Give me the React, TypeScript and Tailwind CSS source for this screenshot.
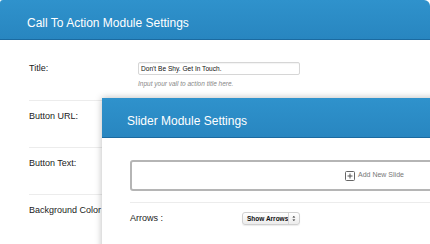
import React from "react";

function Label({ children }: { children: React.ReactNode }) {
  return <div className="w-[109px] shrink-0 text-[9px] leading-[13px] text-[#222] whitespace-nowrap">{children}</div>;
}

export default function App() {
  return (
    <div className="relative w-[430px] h-[244px] overflow-hidden bg-white font-['Liberation_Sans',Arial,sans-serif]">
      {/* Back panel */}
      <div className="w-[430px] rounded-tl-[3px] rounded-tr-[6px] overflow-hidden">
        <div className="h-[40px] flex items-center pt-[7px] pl-[27px] bg-gradient-to-b from-[#2f92cc] to-[#2886c0] border-b border-[#1b6aa0]">
          <span className="text-white text-[12px] leading-none">Call To Action Module Settings</span>
        </div>
        <div className="pl-[29px]">
          <div className="flex pt-[22px] pb-[12px] border-b border-[#ececec]">
            <Label>Title:</Label>
            <div>
              <div className="w-[162px] h-[13px] border border-[#d6d6d6] rounded-[2px] flex items-center pl-[2px] text-[6.6px] text-[#111] shadow-[inset_0_1px_1px_rgba(0,0,0,0.05)]">
                Don't Be Shy. Get In Touch.
              </div>
              <div className="mt-[5px] text-[6.5px] leading-[8px] italic text-[#888]">Input your vall to action title here.</div>
            </div>
          </div>
          <div className="flex h-[47px] pt-[9px] border-b border-[#ececec]">
            <Label>Button URL:</Label>
          </div>
          <div className="flex h-[47px] pt-[9px] border-b border-[#ececec]">
            <Label>Button Text:</Label>
          </div>
          <div className="flex h-[47px] pt-[9px]">
            <Label>Background Color</Label>
          </div>
        </div>
      </div>

      {/* Front panel */}
      <div className="absolute left-[102px] top-[98px] w-[360px] h-[170px] bg-white shadow-[0_0_7px_rgba(0,0,0,0.28)]">
        <div className="h-[40px] flex items-center pt-[7px] pl-[25px] bg-gradient-to-b from-[#2f92cc] to-[#2886c0] border-b border-[#1b6aa0]">
          <span className="text-white text-[12px] leading-none">Slider Module Settings</span>
        </div>
        <div className="pl-[28px]">
          <div className="mt-[22px] h-[31px] border-2 border-[#b5b5b5] rounded-[3px] flex items-center pl-[213px]">
            <svg width="10" height="10" viewBox="0 0 10 10" className="shrink-0">
              <rect x="0.5" y="0.5" width="9" height="9" fill="none" stroke="#666" strokeWidth="1" rx="1" />
              <path d="M5 2.5v5M2.5 5h5" stroke="#555" strokeWidth="1" />
            </svg>
            <span className="ml-[3px] text-[7px] text-[#777] whitespace-nowrap">Add New Slide</span>
          </div>
          <div className="mt-[11px] border-t border-[#ececec] flex pt-[9px]">
            <div className="w-[112px] shrink-0 text-[9px] leading-[13px] text-[#222]">Arrows :</div>
            <div className="w-[58px] h-[13px] rounded-[3px] border border-[#d0d0d0] bg-gradient-to-b from-white to-[#ececec] shadow-[0_1px_1px_rgba(0,0,0,0.08)] flex items-center">
              <span className="pl-[4px] text-[6.5px] font-bold text-[#111] whitespace-nowrap flex-1">Show Arrows</span>
              <div className="w-px h-full bg-[#d6d6d6]" />
              <svg width="8" height="9" viewBox="0 0 8 9" className="mx-[1px]">
                <path d="M2.5 3.5L4 2l1.5 1.5zM2.5 5.5L4 7l1.5-1.5z" fill="#222" />
              </svg>
            </div>
          </div>
        </div>
      </div>
    </div>
  );
}
